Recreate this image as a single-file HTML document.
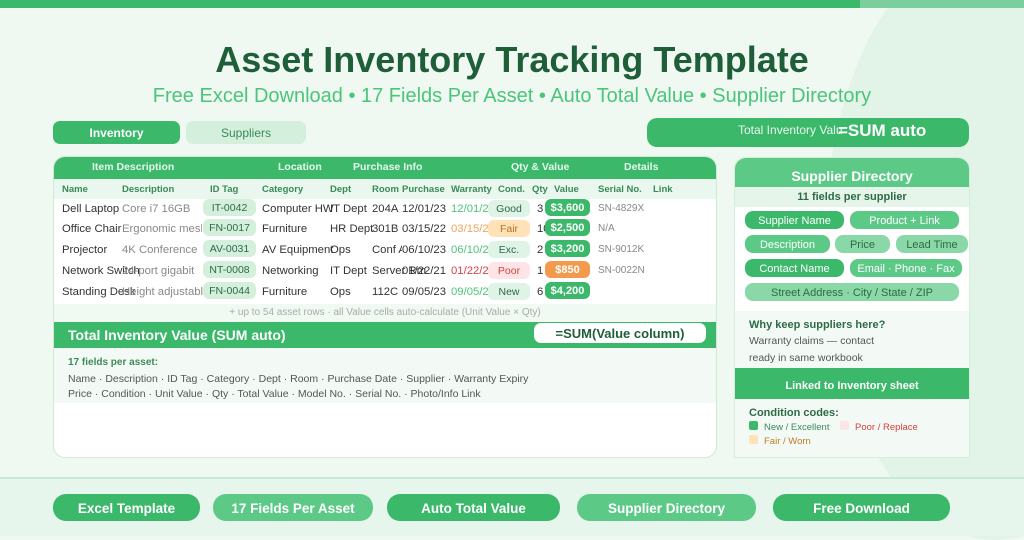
<!DOCTYPE html>
<html><head><meta charset="utf-8"><style>
*{margin:0;padding:0;box-sizing:border-box}
body{width:1024px;height:536px;overflow:hidden;background:#eff8f1;font-family:"Liberation Sans",sans-serif;position:relative}
.a{position:absolute;white-space:nowrap}
.pill{position:absolute;border-radius:9px;text-align:center;color:#fff;font-weight:bold}
.c{font-size:11.3px;color:#333}
.g{color:#888}
.tag{position:absolute;background:#d4f0dd;border-radius:6px;height:17px;font-size:10.5px;color:#2d6a45;text-align:center;line-height:19px}
.val{position:absolute;background:#3bb86a;border-radius:6px;height:17px;font-size:11px;color:#fff;font-weight:bold;text-align:center;line-height:19px;width:45px;left:545px}
.hd{font-size:9.5px;font-weight:bold;color:#3a8a58}
.chip{position:absolute;border-radius:8px;height:18px;font-size:11px;text-align:center;line-height:20px;color:#fff}
.w{width:41px;overflow:hidden}
</style></head><body>
<div class="a" style="left:0;top:0;width:1024px;height:8px;background:#3bb86a"></div>
<div class="a" style="left:825px;top:-60px;width:340px;height:600px;border-radius:50%;background:#e2f4e8"></div>
<div class="a" style="left:860px;top:0;width:164px;height:8px;background:#7ccf9c"></div>
<div class="a" style="left:0;top:39px;width:1024px;text-align:center;font-size:36px;font-weight:bold;color:#1e5e38">Asset Inventory Tracking Template</div>
<div class="a" style="left:0;top:85px;width:1024px;text-align:center;font-size:20px;color:#4cc57a">Free Excel Download • 17 Fields Per Asset • Auto Total Value • Supplier Directory</div>
<div class="pill" style="left:53px;top:121px;width:127px;height:23px;background:#3bb86a;font-size:12px;line-height:25px;border-radius:7px">Inventory</div>
<div class="pill" style="left:186px;top:121px;width:120px;height:23px;background:#d4f0dd;color:#3a8a58;font-weight:normal;font-size:12px;line-height:25px;border-radius:7px">Suppliers</div>
<div class="pill" style="left:647px;top:118px;width:322px;height:29px;background:#3bb86a;border-radius:10px"></div>
<div class="a" style="left:738px;top:123px;font-size:12px;color:#e8f7ee">Total Inventory Valu</div>
<div class="a" style="left:838px;top:121px;font-size:17px;font-weight:bold;color:#fff">=SUM auto</div>

<div class="a" style="left:53px;top:156px;width:664px;height:302px;background:#fff;border:1.5px solid #cdebd7;border-radius:12px;overflow:hidden">
 <div class="a" style="left:0;top:0;width:664px;height:22px;background:#3bb86a"></div>
 <div class="a" style="left:0;top:22px;width:664px;height:20px;background:#eaf7ee"></div>
 <div class="a" style="left:0;top:147px;width:664px;height:18px;background:#f1f9f3"></div>
 <div class="a" style="left:0;top:165px;width:664px;height:26px;background:#3bb86a"></div>
 <div class="a" style="left:0;top:191px;width:664px;height:55px;background:#f3faf5"></div>
</div>
<div class="a hd" style="left:92px;top:161px;color:#e6f7ec;font-size:10.5px">Item Description</div>
<div class="a hd" style="left:278px;top:161px;color:#e6f7ec;font-size:10.5px">Location</div>
<div class="a hd" style="left:353px;top:161px;color:#e6f7ec;font-size:10.5px">Purchase Info</div>
<div class="a hd" style="left:511px;top:161px;color:#e6f7ec;font-size:10.5px">Qty &amp; Value</div>
<div class="a hd" style="left:624px;top:161px;color:#e6f7ec;font-size:10.5px">Details</div>
<div class="a hd" style="left:62px;top:184px">Name</div>
<div class="a hd" style="left:122px;top:184px">Description</div>
<div class="a hd" style="left:210px;top:184px">ID Tag</div>
<div class="a hd" style="left:262px;top:184px">Category</div>
<div class="a hd" style="left:330px;top:184px">Dept</div>
<div class="a hd" style="left:372px;top:184px">Room</div>
<div class="a hd" style="left:402px;top:184px">Purchase</div>
<div class="a hd" style="left:451px;top:184px">Warranty</div>
<div class="a hd" style="left:498px;top:184px">Cond.</div>
<div class="a hd" style="left:532px;top:184px">Qty</div>
<div class="a hd" style="left:554px;top:184px">Value</div>
<div class="a hd" style="left:598px;top:184px">Serial No.</div>
<div class="a hd" style="left:653px;top:184px">Link</div>

<div class="a c" style="left:62px;top:203px">Dell Laptop</div><div class="a c g" style="left:122px;top:203px">Core i7 16GB</div>
<div class="tag" style="left:203px;top:199px;width:53px">IT-0042</div>
<div class="a c" style="left:262px;top:203px">Computer HW</div><div class="a c" style="left:330px;top:203px">IT Dept</div><div class="a c" style="left:372px;top:203px">204A</div><div class="a c" style="left:402px;top:203px">12/01/23</div>
<div class="a c w" style="left:451px;top:203px;color:#4cc57a">12/01/26</div>
<div class="tag" style="left:488px;top:200px;width:42px;background:#dff3e6">Good</div>
<div class="a c" style="left:537px;top:203px">3</div><div class="val" style="top:199px">$3,600</div>
<div class="a c g" style="left:598px;top:203px;font-size:10px">SN-4829X</div>

<div class="a c" style="left:62px;top:223px">Office Chair</div><div class="a c g" style="left:122px;top:223px;width:80px;overflow:hidden">Ergonomic mesh</div>
<div class="tag" style="left:203px;top:219px;width:53px">FN-0017</div>
<div class="a c" style="left:262px;top:223px">Furniture</div><div class="a c" style="left:330px;top:223px">HR Dept</div><div class="a c" style="left:372px;top:223px">301B</div><div class="a c" style="left:402px;top:223px">03/15/22</div>
<div class="a c w" style="left:451px;top:223px;color:#f2a35a">03/15/24</div>
<div class="tag" style="left:488px;top:220px;width:42px;background:#ffe2b8;color:#b87020">Fair</div>
<div class="a c" style="left:537px;top:223px;width:8px;overflow:hidden">10</div><div class="val" style="top:219px">$2,500</div>
<div class="a c g" style="left:598px;top:223px;font-size:10px">N/A</div>

<div class="a c" style="left:62px;top:244px">Projector</div><div class="a c g" style="left:122px;top:244px">4K Conference</div>
<div class="tag" style="left:203px;top:240px;width:53px">AV-0031</div>
<div class="a c" style="left:262px;top:244px">AV Equipment</div><div class="a c" style="left:330px;top:244px">Ops</div><div class="a c" style="left:372px;top:244px;width:30px;overflow:hidden">Conf A</div><div class="a c" style="left:402px;top:244px">06/10/23</div>
<div class="a c w" style="left:451px;top:244px;color:#4cc57a">06/10/26</div>
<div class="tag" style="left:488px;top:241px;width:42px;background:#dff3e6">Exc.</div>
<div class="a c" style="left:537px;top:244px">2</div><div class="val" style="top:240px">$3,200</div>
<div class="a c g" style="left:598px;top:244px;font-size:10px">SN-9012K</div>

<div class="a c" style="left:62px;top:265px">Network Switch</div><div class="a c g" style="left:122px;top:265px">24-port gigabit</div>
<div class="tag" style="left:203px;top:261px;width:53px">NT-0008</div>
<div class="a c" style="left:262px;top:265px">Networking</div><div class="a c" style="left:330px;top:265px">IT Dept</div><div class="a c" style="left:372px;top:265px">Server Rm</div><div class="a c" style="left:402px;top:265px">01/22/21</div>
<div class="a c w" style="left:451px;top:265px;color:#d84040">01/22/24</div>
<div class="tag" style="left:488px;top:262px;width:42px;background:#fde4e6;color:#d84040">Poor</div>
<div class="a c" style="left:537px;top:265px">1</div><div class="val" style="top:261px;background:#f29a4e">$850</div>
<div class="a c g" style="left:598px;top:265px;font-size:10px">SN-0022N</div>

<div class="a c" style="left:62px;top:286px">Standing Desk</div><div class="a c g" style="left:122px;top:286px;width:81px;overflow:hidden">Height adjustable</div>
<div class="tag" style="left:203px;top:282px;width:53px">FN-0044</div>
<div class="a c" style="left:262px;top:286px">Furniture</div><div class="a c" style="left:330px;top:286px">Ops</div><div class="a c" style="left:372px;top:286px">112C</div><div class="a c" style="left:402px;top:286px">09/05/23</div>
<div class="a c w" style="left:451px;top:286px;color:#4cc57a">09/05/28</div>
<div class="tag" style="left:488px;top:283px;width:42px;background:#dff3e6">New</div>
<div class="a c" style="left:537px;top:286px">6</div><div class="val" style="top:282px">$4,200</div>

<div class="a" style="left:53px;top:307px;width:664px;text-align:center;font-size:10px;color:#aaa">+ up to 54 asset rows · all Value cells auto-calculate (Unit Value × Qty)</div>
<div class="a" style="left:68px;top:327px;font-size:14px;font-weight:bold;color:#fff">Total Inventory Value (SUM auto)</div>
<div class="a" style="left:534px;top:323px;width:172px;height:20px;background:#fff;border-radius:7px;text-align:center;font-size:13px;font-weight:bold;color:#1e5e38;line-height:21px">=SUM(Value column)</div>
<div class="a" style="left:68px;top:357px;font-size:10px;font-weight:bold;color:#3a8a58">17 fields per asset:</div>
<div class="a" style="left:68px;top:373px;font-size:10.5px;color:#555">Name · Description · ID Tag · Category · Dept · Room · Purchase Date · Supplier · Warranty Expiry</div>
<div class="a" style="left:68px;top:388px;font-size:10.5px;color:#555">Price · Condition · Unit Value · Qty · Total Value · Model No. · Serial No. · Photo/Info Link</div>

<div class="a" style="left:734px;top:157px;width:236px;height:301px;background:#f3faf5;border:1.5px solid #d4eedc;border-radius:12px 12px 0 0;overflow:hidden">
 <div class="a" style="left:0;top:0;width:236px;height:29px;background:#5cc987"></div>
 <div class="a" style="left:0;top:29px;width:236px;height:20px;background:#e5f5ea"></div>
 <div class="a" style="left:0;top:49px;width:236px;height:104px;background:#fff"></div>
 <div class="a" style="left:0;top:210px;width:236px;height:31px;background:#3bb86a"></div>
</div>
<div class="a" style="left:734px;top:168px;width:236px;text-align:center;font-size:14px;font-weight:bold;color:#fff">Supplier Directory</div>
<div class="a" style="left:734px;top:191px;width:236px;text-align:center;font-size:11px;font-weight:bold;color:#2d6a45">11 fields per supplier</div>
<div class="chip" style="left:745px;top:211px;width:99px;background:#3bb86a">Supplier Name</div>
<div class="chip" style="left:850px;top:211px;width:109px;background:#5cc987">Product + Link</div>
<div class="chip" style="left:745px;top:235px;width:85px;background:#5cc987">Description</div>
<div class="chip" style="left:835px;top:235px;width:55px;background:#8ad8a8;color:#2d6a45">Price</div>
<div class="chip" style="left:896px;top:235px;width:72px;background:#8ad8a8;color:#2d6a45">Lead Time</div>
<div class="chip" style="left:745px;top:259px;width:99px;background:#3bb86a">Contact Name</div>
<div class="chip" style="left:850px;top:259px;width:112px;background:#5cc987">Email · Phone · Fax</div>
<div class="chip" style="left:745px;top:283px;width:214px;background:#8ad8a8;color:#2d6a45">Street Address · City / State / ZIP</div>
<div class="a" style="left:749px;top:319px;font-size:11px;font-weight:bold;color:#2d6a45">Why keep suppliers here?</div>
<div class="a" style="left:749px;top:335px;font-size:10.5px;color:#555">Warranty claims — contact</div>
<div class="a" style="left:749px;top:352px;font-size:10.5px;color:#555">ready in same workbook</div>
<div class="a" style="left:734px;top:380px;width:236px;text-align:center;font-size:11px;font-weight:bold;color:#fff">Linked to Inventory sheet</div>
<div class="a" style="left:749px;top:407px;font-size:11px;font-weight:bold;color:#2d6a45">Condition codes:</div>
<div class="a" style="left:749px;top:421px;width:9px;height:9px;background:#3bb86a;border-radius:2px"></div>
<div class="a" style="left:764px;top:422px;font-size:9.5px;color:#3a8a58">New / Excellent</div>
<div class="a" style="left:840px;top:421px;width:9px;height:9px;background:#fde4e6;border-radius:2px"></div>
<div class="a" style="left:855px;top:422px;font-size:9.5px;color:#d84040">Poor / Replace</div>
<div class="a" style="left:749px;top:435px;width:9px;height:9px;background:#ffe2b8;border-radius:2px"></div>
<div class="a" style="left:764px;top:436px;font-size:9.5px;color:#c07a20">Fair / Worn</div>

<div class="a" style="left:0;top:477px;width:1024px;height:59px;background:#e6f6ec;border-top:2px solid #c6ead3"></div>
<div class="pill" style="left:53px;top:494px;width:147px;height:27px;line-height:29px;font-size:13.5px;background:#3bb86a;border-radius:13px">Excel Template</div>
<div class="pill" style="left:213px;top:494px;width:160px;height:27px;line-height:29px;font-size:13.5px;background:#5cc987;border-radius:13px">17 Fields Per Asset</div>
<div class="pill" style="left:387px;top:494px;width:173px;height:27px;line-height:29px;font-size:13.5px;background:#3bb86a;border-radius:13px">Auto Total Value</div>
<div class="pill" style="left:577px;top:494px;width:179px;height:27px;line-height:29px;font-size:13.5px;background:#5cc987;border-radius:13px">Supplier Directory</div>
<div class="pill" style="left:773px;top:494px;width:177px;height:27px;line-height:29px;font-size:13.5px;background:#3bb86a;border-radius:13px">Free Download</div>
</body></html>
